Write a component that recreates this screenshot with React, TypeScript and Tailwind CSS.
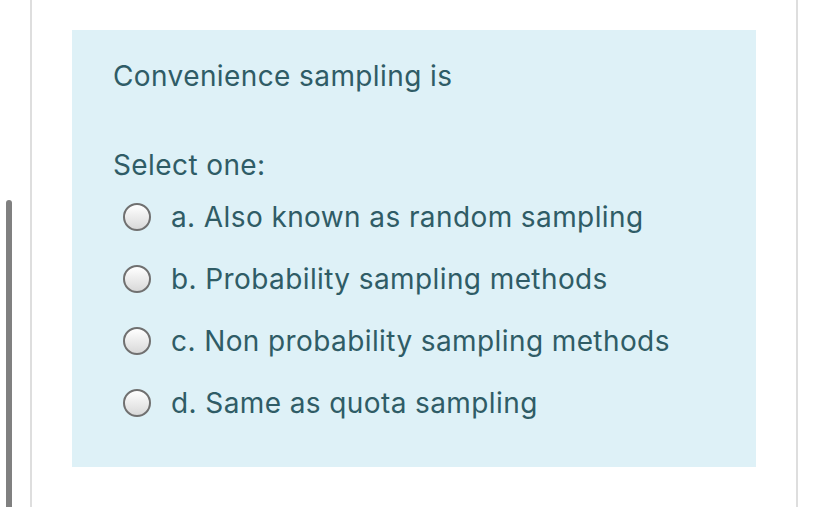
import React from "react";

const options = [
  "a. Also known as random sampling",
  "b. Probability sampling methods",
  "c. Non probability sampling methods",
  "d. Same as quota sampling",
];

export default function App() {
  return (
    <div
      className="relative w-[828px] h-[507px] bg-white overflow-hidden"
      style={{ fontFamily: "Inter, 'Noto Sans', sans-serif" }}
    >
      <div className="absolute left-[6px] top-[200px] w-[6px] h-[320px] rounded-t-full bg-[#808080]" />
      <div className="ml-[30px] w-[768px] h-[507px] border-l-2 border-r-2 border-[#dedede] pl-[40px] pt-[30px]">
        <div className="w-[684px] h-[437px] bg-[#def1f7] pl-[41px] pt-[28px] text-[#2f5c66]">
          <div className="text-[28px] leading-[36px] tracking-[0.4px]">Convenience sampling is</div>
          <div className="text-[28px] leading-[36px] mt-[53px] tracking-[0.4px]">Select one:</div>
          <div className="mt-[16px] flex flex-col gap-[26px] pl-[10px]">
            {options.map((o) => (
              <div key={o} className="flex items-center h-[36px]">
                <div className="w-[28px] h-[28px] rounded-full border-2 border-[#707070] bg-gradient-to-b from-white to-[#d9d9d9] shrink-0" />
                <div className="ml-[20px] text-[28px] leading-[36px] tracking-[0.4px]">{o}</div>
              </div>
            ))}
          </div>
        </div>
      </div>
    </div>
  );
}
